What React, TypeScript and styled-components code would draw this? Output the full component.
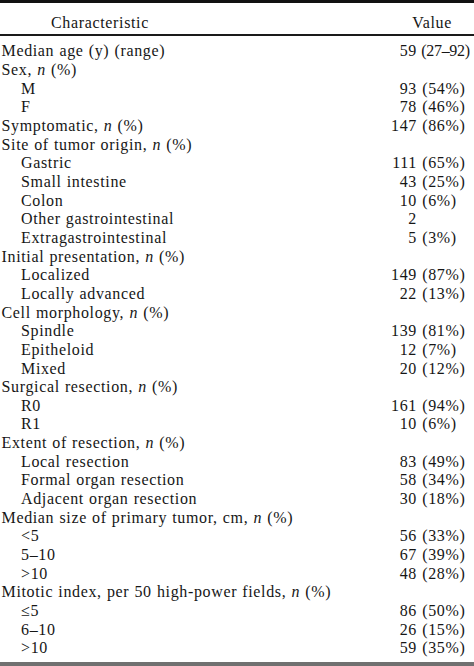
import React from "react";
import styled, { createGlobalStyle } from "styled-components";

const GlobalStyle = createGlobalStyle`
  html, body {
    margin: 0;
    padding: 0;
    background: #ffffff;
  }
`

const TableWrapper = styled.div`
  width: 474px;
  height: 666px;
  box-sizing: border-box;
  border-top: 3px solid #111;
  border-bottom: 4px solid #707070;
  font-family: "Liberation Serif", "Times New Roman", serif;
  font-size: 16px;
  letter-spacing: 0.65px;
  word-spacing: 0.5px;
  color: #161616;
  display: flex;
  flex-direction: column;
  overflow: hidden;
`

const HeaderRow = styled.div`
  display: grid;
  grid-template-columns: 200px 1fr;
  padding: 11px 22px 1px 0;
  line-height: 18.66px;
  border-bottom: 2px solid #1a1a1a;
`

const HeaderCell = styled.div<{ $align: "center" | "right" }>`
  text-align: ${props => props.$align};
`

const Body = styled.div`
  display: flex;
  flex-direction: column;
  padding: 6.7px 0 0 0;
`

const Row = styled.div`
  display: grid;
  grid-template-columns: 1fr 60px 57px;
  height: 18.66px;
  line-height: 18.66px;
  white-space: nowrap;
`

const Label = styled.div<{ $indent: boolean }>`
  padding-left: ${props => (props.$indent ? "21px" : "1.5px")};
`

const Num = styled.div`
  text-align: right;
`

const Pct = styled.div<{ $tight: boolean }>`
  text-align: left;
  white-space: pre;
  letter-spacing: ${props => (props.$tight ? "-0.3px" : "inherit")};
`

const N = () => <i>n</i>;

interface IRow {
    label: React.ReactNode;
    indent?: boolean;
    num?: string;
    pct?: string;
    tight?: boolean;
}

const rows: IRow[] = [
    { label: "Median age (y) (range)", num: "59", pct: "(27–92)", tight: true },
    { label: <>Sex, <N /> (%)</> },
    { label: "M", indent: true, num: "93", pct: "(54%)" },
    { label: "F", indent: true, num: "78", pct: "(46%)" },
    { label: <>Symptomatic, <N /> (%)</>, num: "147", pct: "(86%)" },
    { label: <>Site of tumor origin, <N /> (%)</> },
    { label: "Gastric", indent: true, num: "111", pct: "(65%)" },
    { label: "Small intestine", indent: true, num: "43", pct: "(25%)" },
    { label: "Colon", indent: true, num: "10", pct: "(6%)" },
    { label: "Other gastrointestinal", indent: true, num: "2" },
    { label: "Extragastrointestinal", indent: true, num: "5", pct: "(3%)" },
    { label: <>Initial presentation, <N /> (%)</> },
    { label: "Localized", indent: true, num: "149", pct: "(87%)" },
    { label: "Locally advanced", indent: true, num: "22", pct: "(13%)" },
    { label: <>Cell morphology, <N /> (%)</> },
    { label: "Spindle", indent: true, num: "139", pct: "(81%)" },
    { label: "Epitheloid", indent: true, num: "12", pct: "(7%)" },
    { label: "Mixed", indent: true, num: "20", pct: "(12%)" },
    { label: <>Surgical resection, <N /> (%)</> },
    { label: "R0", indent: true, num: "161", pct: "(94%)" },
    { label: "R1", indent: true, num: "10", pct: "(6%)" },
    { label: <>Extent of resection, <N /> (%)</> },
    { label: "Local resection", indent: true, num: "83", pct: "(49%)" },
    { label: "Formal organ resection", indent: true, num: "58", pct: "(34%)" },
    { label: "Adjacent organ resection", indent: true, num: "30", pct: "(18%)" },
    { label: <>Median size of primary tumor, cm, <N /> (%)</> },
    { label: "<5", indent: true, num: "56", pct: "(33%)" },
    { label: "5–10", indent: true, num: "67", pct: "(39%)" },
    { label: ">10", indent: true, num: "48", pct: "(28%)" },
    { label: <>Mitotic index, per 50 high-power fields, <N /> (%)</> },
    { label: "≤5", indent: true, num: "86", pct: "(50%)" },
    { label: "6–10", indent: true, num: "26", pct: "(15%)" },
    { label: ">10", indent: true, num: "59", pct: "(35%)" },
];

export default function App(): JSX.Element {
    return (
        <>
            <GlobalStyle />
            <TableWrapper>
                <HeaderRow>
                    <HeaderCell $align="center">Characteristic</HeaderCell>
                    <HeaderCell $align="right">Value</HeaderCell>
                </HeaderRow>
                <Body>
                    {rows.map((row, i) => (
                        <Row key={i}>
                            <Label $indent={!!row.indent}>{row.label}</Label>
                            <Num>{row.num}</Num>
                            <Pct $tight={!!row.tight}>{row.pct ? " " + row.pct : ""}</Pct>
                        </Row>
                    ))}
                </Body>
            </TableWrapper>
        </>
    )
}
